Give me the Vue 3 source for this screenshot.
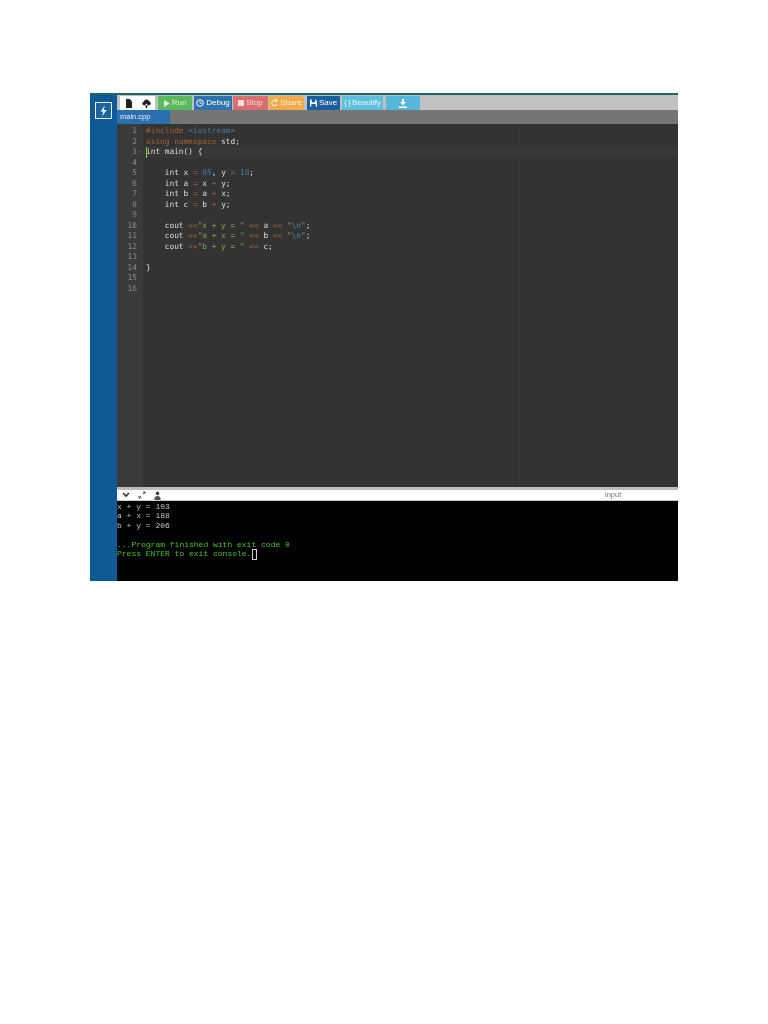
<script setup>
const k = 'kw', n = 'lit', o = 'op', s = 'str', b = 'inc', e = 'esc'
const code = [
  [['#include ', k], ['<iostream>', b]],
  [['using namespace', k], [' std;']],
  [['int main() {']],
  [],
  [['    int x '], ['=', o], [' '], ['85', n], [', y '], ['=', o], [' '], ['18', n], [';']],
  [['    int a '], ['=', o], [' x '], ['+', o], [' y;']],
  [['    int b '], ['=', o], [' a '], ['+', o], [' x;']],
  [['    int c '], ['=', o], [' b '], ['+', o], [' y;']],
  [],
  [['    cout '], ['<<', o], ['"x + y = "', s], [' '], ['<<', o], [' a '], ['<<', o], [' '], ['"', s], ['\\n', e], ['"', s], [';']],
  [['    cout '], ['<<', o], ['"a + x = "', s], [' '], ['<<', o], [' b '], ['<<', o], [' '], ['"', s], ['\\n', e], ['"', s], [';']],
  [['    cout '], ['<<', o], ['"b + y = "', s], [' '], ['<<', o], [' c;']],
  [],
  [['}']],
  [],
  []
]
const buttons = [
  { label: 'Run', cls: 'run', icon: 'play' },
  { label: 'Debug', cls: 'debug', icon: 'clock' },
  { label: 'Stop', cls: 'stop', icon: 'square' },
  { label: 'Share', cls: 'share', icon: 'share' },
  { label: 'Save', cls: 'save', icon: 'disk' },
  { label: 'Beautify', cls: 'beautify', icon: 'braces' }
]
</script>

<template>
  <div class="page">
    <div class="app">
      <aside class="side">
        <div class="logo">
          <svg width="11" height="12" viewBox="0 0 11 12"><path d="M6.8 0.6 2.6 6.6h2.7L4 11.4 8.6 5H5.8z" fill="#fff" /></svg>
        </div>
      </aside>
      <main class="main">
        <div class="toolbar">
          <div class="tools">
            <button class="tool" aria-label="New file">
              <svg width="8" height="9" viewBox="0 0 8 9"><path d="M1 0h3.6L7 2.4V9H1z" fill="#222" /></svg>
            </button>
            <button class="tool" aria-label="Upload">
              <svg width="11" height="9" viewBox="0 0 11 9"><path d="M2.6 6.2A2 2 0 0 1 2.8 2.4 2.9 2.9 0 0 1 8.3 2.6 1.9 1.9 0 0 1 8.6 6.2H7L5.5 4.4 4 6.2zM4.7 6h1.6v3H4.7z" fill="#222" /></svg>
            </button>
          </div>
          <button v-for="item in buttons" :key="item.label" class="btn" :class="item.cls">
            <svg v-if="item.icon === 'play'" width="6" height="7" viewBox="0 0 7 8"><path d="M0 0l7 4-7 4z" fill="currentColor" /></svg>
            <svg v-else-if="item.icon === 'clock'" width="8" height="8" viewBox="0 0 8 8"><circle cx="4" cy="4" r="3.3" fill="none" stroke="currentColor" /><path d="M4 2v2.2h1.8" fill="none" stroke="currentColor" stroke-width=".8" /></svg>
            <svg v-else-if="item.icon === 'square'" width="6" height="6" viewBox="0 0 7 7"><rect width="7" height="7" fill="currentColor" /></svg>
            <svg v-else-if="item.icon === 'share'" width="7" height="8" viewBox="0 0 8 8"><path d="M6.7 5A3 3 0 1 1 5.6 1.6M4.8 0 7 1 5.6 3.2" fill="none" stroke="currentColor" stroke-width="1.2" /></svg>
            <svg v-else-if="item.icon === 'disk'" width="7" height="8" viewBox="0 0 8 8"><path d="M0 0h2v3h4V0h.4L8 1.6V8H6.5V5h-5v3H0z" fill="currentColor" /></svg>
            <span v-else class="braces">{ }</span>
            <span>{{ item.label }}</span>
          </button>
          <button class="btn download" aria-label="Download">
            <svg width="8" height="9" viewBox="0 0 8 9"><path d="M3 0h2v3h2L4 6.2 1 3h2zM0 7.4h8V9H0z" fill="currentColor" /></svg>
          </button>
        </div>
        <div class="tabs"><div class="tab">main.cpp</div></div>
        <div class="editor">
          <div class="gutter">
            <div v-for="(line, i) in code" :key="i" class="gnum">
              {{ i + 1 }}<span v-if="i === 2" class="fold">-</span>
            </div>
          </div>
          <div class="codepane">
            <div class="margin"></div>
            <div v-for="(line, i) in code" :key="i" class="line" :class="{ active: i === 2 }">
              <span v-if="i === 2" class="cursor"></span>
              <span v-for="(t, j) in line" :key="j" :class="t[1]">{{ t[0] }}</span>
            </div>
          </div>
        </div>
        <div class="splitter"></div>
        <div class="conbar">
          <svg class="ci" width="8" height="6" viewBox="0 0 8 6"><path d="M1 1l3 3 3-3" fill="none" stroke="#333" stroke-width="1.6" /></svg>
          <svg class="ci" width="8" height="8" viewBox="0 0 8 8"><path d="M1 7l2-2M5 3l2-2M5.2 1H7v1.8M1 5.2V7h1.8" fill="none" stroke="#444" /></svg>
          <svg class="ci" width="7" height="9" viewBox="0 0 7 9"><circle cx="3.5" cy="2.4" r="1.8" fill="#444" /><path d="M0.5 9V6.5L2.5 5h2l2 1.5V9z" fill="#555" /></svg>
          <span class="inputlabel">input</span>
        </div>
        <div class="console">
          <div class="cl out">x + y = 103</div>
          <div class="cl out">a + x = 188</div>
          <div class="cl out">b + y = 206</div>
          <div class="cl"></div>
          <div class="cl ok">...Program finished with exit code 0</div>
          <div class="cl ok">Press ENTER to exit console.<span class="caret"></span></div>
        </div>
      </main>
    </div>
  </div>
</template>

<style>
html, body { background: #fff; }
</style>

<style scoped>
.page { width: 768px; height: 1024px; padding: 93px 0 0 90px; box-sizing: border-box; background: #fff; }
.app { width: 588px; height: 488px; display: flex; border-top: 2px solid #1f6469; box-sizing: border-box; }
.side { width: 27px; background: #0f5a96; flex: none; padding: 7px 0 0 5px; box-sizing: border-box; }
.logo { width: 17px; height: 17px; border: 1px solid #e8f0f6; box-sizing: border-box; display: flex; align-items: center; justify-content: center; background: #1a659f; }
.main { flex: 1; min-width: 0; display: flex; flex-direction: column; }
.toolbar { height: 15px; background: #c1c1c1; display: flex; gap: 2px; padding: 1px 0 0 3px; box-sizing: border-box; }
button { border: 0; padding: 0; margin: 0; height: 14px; display: flex; align-items: center; justify-content: center; gap: 2px; font: 8px/14px "Liberation Sans", Arial, sans-serif; filter: blur(0.4px); }
.tools { display: flex; width: 35px; background: #fff; flex: none; margin-right: 1px; }
.tool { width: 17.5px; background: #fff; }
.btn { color: #fff; flex: none; }
.run { width: 34px; background: #5cb85c; color: #d9efd9; }
.debug { width: 38px; background: #2f72ad; }
.stop { width: 35px; background: #d9706f; color: #f6dede; margin-left: -1px; }
.share { width: 35px; background: #f0ab4f; color: #fdf0dc; margin-left: -1px; }
.save { width: 33px; background: #1c5f9f; margin-left: 1px; }
.beautify { width: 41px; background: #5ebfdd; color: #e8f7fb; }
.download { width: 34px; background: #56b7dc; margin-left: 1px; }
.braces { letter-spacing: -0.5px; }
.tabs { height: 14px; background: #757575; flex: none; }
.tab { width: 53px; height: 14px; background: #2a6fb0; color: #e9f1f7; font: 7.5px/14px "Liberation Sans", Arial, sans-serif; padding-left: 3px; box-sizing: border-box; filter: blur(0.3px); }
.editor { height: 363px; background: #333; display: flex; flex: none; box-sizing: border-box; font: 7.8px/10.53px "DejaVu Sans Mono", monospace; }
.gutter { width: 26px; background: #3a3a3a; color: #8a8a8a; flex: none; padding-top: 2px; box-sizing: border-box; filter: blur(0.4px); }
.gnum { height: 10.53px; padding-right: 6px; text-align: right; position: relative; }
.fold { position: absolute; right: 1px; top: 0; }
.codepane { flex: 1; position: relative; padding: 2px 0 0 3px; color: #dcdcdc; }
.margin { position: absolute; left: 376px; top: 0; bottom: 0; width: 1px; background: #393939; }
.line { height: 10.53px; white-space: pre; position: relative; filter: blur(0.35px); }
.active { background: #373737; margin-left: -3px; padding-left: 3px; }
.cursor { position: absolute; left: 3px; top: 0; width: 1px; height: 10.5px; background: #7fd13b; }
.kw { color: #a8602e; }
.inc { color: #4a7a9f; }
.lit { color: #4a7ca6; }
.op { color: #a8602e; }
.str { color: #8f9c4a; }
.esc { color: #4a86ac; }
.splitter { height: 3px; background: #bdbdbd; flex: none; }
.conbar { height: 11px; background: #fff; flex: none; display: flex; align-items: center; gap: 8px; padding-left: 5px; position: relative; box-sizing: border-box; border-bottom: 1px solid #ccc; }
.ci { filter: blur(0.3px); }
.inputlabel { position: absolute; left: 488px; top: 0; font: 7.5px/10px "Liberation Sans", Arial, sans-serif; color: #777; filter: blur(0.3px); }
.console { flex: 1; background: #000; font: 8px/9.5px "Liberation Mono", monospace; padding-top: 0.5px; overflow: hidden; filter: blur(0.3px); }
.cl { height: 9.5px; white-space: pre; }
.out { color: #c4c4c4; }
.ok { color: #45c81c; }
.caret { display: inline-block; width: 5px; height: 11px; border: 1px solid #ccc; box-sizing: border-box; vertical-align: top; margin-left: 1px; }
</style>
